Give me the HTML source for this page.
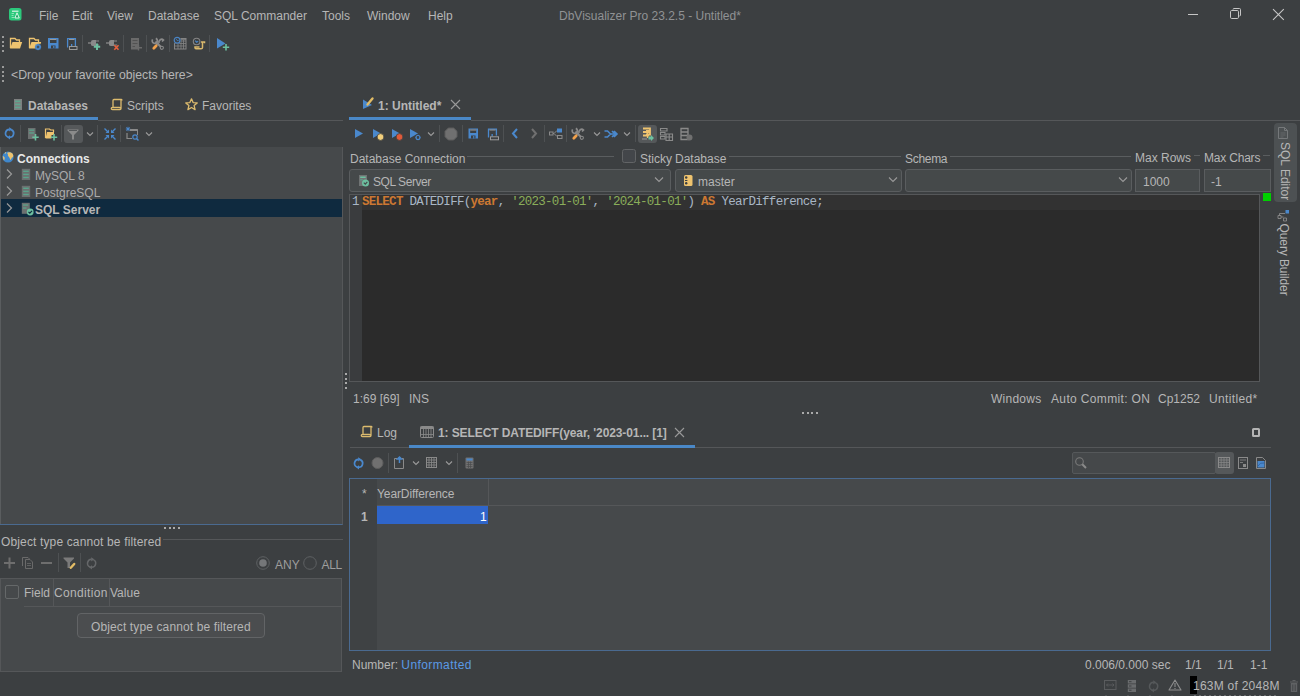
<!DOCTYPE html>
<html><head><meta charset="utf-8">
<style>
html,body{margin:0;padding:0;}
body{width:1300px;height:696px;overflow:hidden;background:#3c3f41;position:relative;font-family:"Liberation Sans",sans-serif;font-size:12px;color:#b6b6b6;}
.a{position:absolute;}
.t{position:absolute;white-space:pre;line-height:14px;}
.b{font-weight:bold;}
.hl{position:absolute;height:1px;background:#555759;}
.vl{position:absolute;width:1px;background:#555759;}
svg{position:absolute;overflow:visible;}
.mono{font-family:"Liberation Mono",monospace;}
</style></head><body>

<!-- ===== Title / menu bar ===== -->
<svg style="left:9px;top:8px" width="13" height="13" viewBox="0 0 13 13"><rect x="0" y="0" width="12.5" height="12.5" rx="2.5" fill="#2cc97c"/><path d="M3,3.2H9.5" stroke="#e6f7ee" stroke-width="1.1"/><path d="M2.6,5.5H5M2.6,7.5H4.5M2.6,9.5H5.5" stroke="#a8e8c6" stroke-width="0.8"/><path d="M8,4.8 L10.3,10 H6 Z" fill="none" stroke="#d8f4e4" stroke-width="1"/><circle cx="8" cy="8.3" r="0.9" fill="#1f9a5c"/></svg>
<div class="a" style="left:1188px;top:14px;width:10px;height:1px;background:#c6c6c6;"></div>
<svg style="left:1228px;top:7px" width="16" height="14" viewBox="0 0 16 14"><path d="M5,2.5 Q5,1.5 6,1.5 H11.5 Q12.5,1.5 12.5,2.5 V8 Q12.5,9 11.5,9" fill="none" stroke="#c6c6c6" stroke-width="1"/><rect x="2.5" y="3.5" width="8" height="8" rx="1.2" fill="none" stroke="#c6c6c6" stroke-width="1"/></svg>
<svg style="left:1272px;top:8px" width="13" height="13" viewBox="0 0 13 13"><path d="M1,1.2 L11.8,11.8 M11.8,1.2 L1,11.8" stroke="#c6c6c6" stroke-width="1.1"/></svg>
<div class="t" style="left:39px;top:9px;">File</div>
<div class="t" style="left:72px;top:9px;">Edit</div>
<div class="t" style="left:107px;top:9px;">View</div>
<div class="t" style="left:148px;top:9px;">Database</div>
<div class="t" style="left:214px;top:9px;">SQL Commander</div>
<div class="t" style="left:322px;top:9px;">Tools</div>
<div class="t" style="left:367px;top:9px;">Window</div>
<div class="t" style="left:428px;top:9px;">Help</div>
<div class="t" style="left:559px;top:9px;color:#909294;">DbVisualizer Pro 23.2.5 - Untitled*</div>

<!-- ===== Main toolbar ===== -->
<!-- grip -->
<div class="a" style="left:2px;top:36px;width:2px;height:2px;background:#9a9a9a;box-shadow:0 5px #9a9a9a,0 9px #9a9a9a,0 14px #9a9a9a;"></div>
<div class="a" style="left:2px;top:66px;width:2px;height:2px;background:#9a9a9a;box-shadow:0 5px #9a9a9a,0 9px #9a9a9a,0 14px #9a9a9a;"></div>
<!-- open folder -->
<svg style="left:8px;top:36px" width="16" height="16" viewBox="0 0 16 16"><path d="M2.5,12 V2.5 H7 L8.5,4 H11.5 V6" fill="none" stroke="#eec36f" stroke-width="1.3"/><path d="M4.5,6 H14.2 L12,12.5 H2 Z" fill="#eec36f"/></svg>
<!-- folder gear -->
<svg style="left:27px;top:36px" width="16" height="16" viewBox="0 0 16 16"><path d="M2.5,12 V2.5 H7 L8.5,4 H11.5 V6" fill="none" stroke="#eec36f" stroke-width="1.3"/><path d="M4.5,6 H14.2 L13.5,8 A4,4 0 0 0 8.5,12.5 H2 Z" fill="#eec36f"/><circle cx="11" cy="11" r="2.2" fill="none" stroke="#4a88cc" stroke-width="1.6"/><path d="M11,7.8V14.2M7.8,11H14.2M8.8,8.8L13.2,13.2M13.2,8.8L8.8,13.2" stroke="#4a88cc" stroke-width="1"/><circle cx="11" cy="11" r="1" fill="#3c3f41"/></svg>
<!-- save -->
<svg style="left:46px;top:36px" width="16" height="16" viewBox="0 0 16 16"><rect x="2" y="2" width="10.5" height="10.5" fill="#4a88cc"/><rect x="4" y="3" width="6.5" height="4" fill="#3c3f41"/><rect x="4" y="3" width="6.5" height="1" fill="#9a9a9a"/><rect x="5" y="9.5" width="4.5" height="3" fill="#3c3f41"/><rect x="7.2" y="10" width="1.2" height="2" fill="#4a88cc"/></svg>
<!-- save as -->
<svg style="left:65px;top:36px" width="16" height="16" viewBox="0 0 16 16"><path d="M2.6,11.5 V2.6 H10.4 V10" fill="none" stroke="#4a88cc" stroke-width="1.3"/><rect x="4" y="3" width="5.5" height="1" fill="#9a9a9a"/><rect x="6" y="8" width="1.3" height="2.5" fill="#4a88cc"/><rect x="4.5" y="10.5" width="7.5" height="3" fill="none" stroke="#9a9a9a" stroke-width="1"/></svg>
<div class="vl" style="left:82px;top:35px;height:17px;background:#4e5153"></div>
<!-- plug + -->
<svg style="left:86px;top:36px" width="16" height="16" viewBox="0 0 16 16"><path d="M2,7 H5" stroke="#8a8a8a" stroke-width="1.3"/><path d="M5,5.5 Q5,4 7,4 H10 V10 H7 Q5,10 5,8.5 Z" fill="#8a8a8a"/><path d="M10,5 H13 M10,9 H13" stroke="#8a8a8a" stroke-width="1.1"/><path d="M11,7.5 V14 M7.8,10.8 H14.2" stroke="#6cc0a0" stroke-width="2"/></svg>
<!-- plug x -->
<svg style="left:104px;top:36px" width="16" height="16" viewBox="0 0 16 16"><path d="M2,7 H5" stroke="#8a8a8a" stroke-width="1.3"/><path d="M5,5.5 Q5,4 7,4 H10 V10 H7 Q5,10 5,8.5 Z" fill="#8a8a8a"/><path d="M10,5 H13 M10,9 H13" stroke="#8a8a8a" stroke-width="1.1"/><path d="M10.3,9.3 L14.5,13.8 M14.5,9.3 L10.3,13.8" stroke="#e8613e" stroke-width="1.6"/></svg>
<div class="vl" style="left:123px;top:35px;height:17px;background:#4e5153"></div>
<!-- server disabled -->
<svg style="left:129px;top:36px" width="16" height="16" viewBox="0 0 16 16"><rect x="2" y="2" width="8" height="11.5" fill="#6a6a6a"/><path d="M3.5,4.5H8.5M3.5,7.5H8.5M3.5,10.5H6" stroke="#525252" stroke-width="1"/><path d="M9.5,9V14.5M7,11.8H13" stroke="#6a6a6a" stroke-width="1.4"/></svg>
<div class="vl" style="left:146px;top:35px;height:17px;background:#4e5153"></div>
<!-- tools -->
<svg style="left:150px;top:36px" width="16" height="16" viewBox="0 0 16 16"><path d="M2.6,3.4 A2.6,2.6 0 1 0 5.8,2.4" fill="none" stroke="#8a8a8a" stroke-width="1.7"/><path d="M5.5,5.5 L11,11" stroke="#8a8a8a" stroke-width="1.9"/><path d="M6,9.5 L9.5,6" stroke="#8a8a8a" stroke-width="1.3"/><circle cx="11.8" cy="11.8" r="1.6" fill="none" stroke="#8a8a8a" stroke-width="1.1"/><path d="M8.5,6 L10.5,3.5 Q12,2.5 13.5,4 L12,5.5" fill="none" stroke="#8a8a8a" stroke-width="1.7"/><path d="M3.8,12.2 L6.2,9.8" stroke="#f0a04b" stroke-width="2.8" stroke-linecap="round"/></svg>
<div class="vl" style="left:169px;top:35px;height:17px;background:#4e5153"></div>
<!-- clock grid -->
<svg style="left:172px;top:36px" width="16" height="16" viewBox="0 0 16 16"><rect x="2.5" y="2.5" width="11.5" height="10.5" fill="none" stroke="#858585" stroke-width="1"/><rect x="8" y="2" width="6" height="1.8" fill="#858585"/><path d="M2.5,5H14M2.5,7.5H14M2.5,10H14M6,4V13M9,4V13M11.5,4V13" stroke="#858585" stroke-width="0.8"/><circle cx="5.1" cy="4.2" r="3.6" fill="#3c3f41"/><circle cx="5.1" cy="4.2" r="2.9" fill="none" stroke="#4a84c4" stroke-width="1.2"/><path d="M4.2,3.2 L5.3,4.6 L6.6,4.4" fill="none" stroke="#4a84c4" stroke-width="0.9"/></svg>
<!-- clock scroll -->
<svg style="left:191px;top:36px" width="16" height="16" viewBox="0 0 16 16"><path d="M11.5,6.5 V11.5 Q11.5,12.8 10,12.8 H5 Q4,12.8 4,11.8 V11 H8.5 M10,6 H13.5 V7.2" fill="none" stroke="#d9b86c" stroke-width="1.5"/><circle cx="5.6" cy="5.5" r="3.9" fill="#3c3f41"/><circle cx="5.6" cy="5.5" r="3.3" fill="none" stroke="#858585" stroke-width="1.1"/><path d="M4.2,4.6 L5.6,6.2 L7.2,5.2" fill="none" stroke="#4a84c4" stroke-width="1.1"/></svg>
<div class="vl" style="left:209px;top:35px;height:17px;background:#4e5153"></div>
<!-- play plus -->
<svg style="left:215px;top:36px" width="16" height="16" viewBox="0 0 16 16"><path d="M2,2 L10.5,7.5 L2,12.5 Z" fill="#4a88cc"/><path d="M11,8 V14.5 M7.8,11.2 H14.2" stroke="#6cc0a0" stroke-width="1.6"/></svg>


<!-- ===== Favorites bar ===== -->
<div class="t" style="left:11px;top:68px;font-size:12.25px;">&lt;Drop your favorite objects here&gt;</div>

<!-- ===== Left tabs ===== -->
<svg style="left:13px;top:98px" width="10" height="13" viewBox="0 0 10 13"><rect x="1" y="1" width="8" height="11" fill="#7d7f7f"/><rect x="2" y="2.5" width="5.5" height="1.6" fill="#5fa58e"/><rect x="2" y="5.6" width="5.5" height="1.6" fill="#5fa58e"/><rect x="2" y="8.7" width="5.5" height="1.6" fill="#5fa58e"/></svg>
<svg style="left:110px;top:98px" width="14" height="13" viewBox="0 0 14 13"><path d="M3,9 V2.5 Q3,1.5 4,1.5 H11.5 Q12,1.5 12,2.5 M11,2 V10.5 Q11,11.5 10,11.5 H2.5 Q1.3,11.5 1.3,10.3 Q1.3,9.3 2.5,9.3 H9.5 Q10.5,9.3 10.5,10.5" fill="none" stroke="#dcbb6e" stroke-width="1.3"/></svg>
<svg style="left:184px;top:97px" width="15" height="14" viewBox="0 0 15 14"><path d="M7.5,1.8 L9.1,5.6 L13.2,5.9 L10.1,8.6 L11.1,12.6 L7.5,10.5 L3.9,12.6 L4.9,8.6 L1.8,5.9 L5.9,5.6 Z" fill="none" stroke="#dcbb6e" stroke-width="1.3" stroke-linejoin="round"/></svg>

<div class="t b" style="left:28px;top:99px;">Databases</div>
<div class="t" style="left:127px;top:99px;">Scripts</div>
<div class="t" style="left:202px;top:99px;">Favorites</div>
<div class="a" style="left:0;top:117px;width:98px;height:3px;background:#4a88c7;"></div>
<div class="hl" style="left:98px;top:120px;width:245px;"></div>


<!-- left toolbar -->
<svg style="left:2.7px;top:126px" width="14" height="15" viewBox="0 0 14 15"><path d="M6.6,3.3 A4,4 0 0 0 5,11" fill="none" stroke="#4a88cc" stroke-width="1.7"/><path d="M6.6,11.3 A4,4 0 0 0 8.2,3.6" fill="none" stroke="#4a88cc" stroke-width="1.7"/><path d="M6.2,1.2 L9.2,3.3 L6.2,5.4 Z M7,9.2 L4,11.3 L7,13.4 Z" fill="#4a88cc"/></svg>
<div class="vl" style="left:20px;top:125px;height:17px;background:#4e5153"></div>
<svg style="left:27px;top:127px" width="12" height="14" viewBox="0 0 12 14"><rect x="1" y="1" width="7.5" height="11" fill="#6c7070"/><rect x="2.2" y="2.5" width="5" height="1.3" fill="#5aa38b"/><rect x="2.2" y="5.3" width="5" height="1.3" fill="#5aa38b"/><path d="M8.5,7 V13.5 M5.3,10.2 H11.7" stroke="#6cc0a0" stroke-width="1.6"/></svg>
<svg style="left:44px;top:127px" width="14" height="14" viewBox="0 0 14 14"><path d="M1.5,11 V2 H5.5 L6.5,3 H9.5 V5" fill="none" stroke="#eec36f" stroke-width="1.2"/><path d="M3,5 H10 V8 H7.5 V11.5 H1.5 Z" fill="#eec36f"/><path d="M10,7 V13.5 M6.8,10.2 H13.2" stroke="#6cc0a0" stroke-width="1.6"/></svg>
<div class="vl" style="left:61px;top:125px;height:17px;background:#4e5153"></div>
<div class="a" style="left:64px;top:125px;width:19px;height:18px;border-radius:3px;background:#55585a;"></div>
<svg style="left:66px;top:128px" width="14" height="13" viewBox="0 0 14 13"><path d="M1.5,1.5 H12.5 V2.5 L8,7 V11.5 H6 V7 L1.5,2.5 Z" fill="#8a8a8a"/><rect x="3" y="2" width="8" height="1" fill="#55585a"/></svg>
<svg style="left:86px;top:131px" width="8" height="6" viewBox="0 0 8 6"><path d="M1,1.5 L4,4.5 L7,1.5" fill="none" stroke="#9a9a9a" stroke-width="1.1"/></svg>
<div class="vl" style="left:97px;top:125px;height:17px;background:#4e5153"></div>
<svg style="left:103px;top:127px" width="14" height="14" viewBox="0 0 14 14"><path d="M1.5,1.5 L5.5,5.5 M12.5,1.5 L8.5,5.5 M1.5,12.5 L5.5,8.5 M12.5,12.5 L8.5,8.5" stroke="#4a88cc" stroke-width="1.4"/><path d="M6,6 H2.5 L6,2.5 Z M8,6 H11.5 L8,2.5 Z M6,8 H2.5 L6,11.5 Z M8,8 H11.5 L8,11.5 Z" fill="#4a88cc"/></svg>
<div class="vl" style="left:120px;top:125px;height:17px;background:#4e5153"></div>
<svg style="left:124px;top:126px" width="16" height="16" viewBox="0 0 16 16"><path d="M6,3.5 H13.5 V9" fill="none" stroke="#8a8a8a" stroke-width="1"/><rect x="6" y="3" width="7.5" height="2" fill="#8a8a8a"/><path d="M3,7 V12.5 H8" fill="none" stroke="#8a8a8a" stroke-width="1.2"/><path d="M4,0.8 V5.2 M1.8,3 H6.2 M2.4,1.4 L5.6,4.6 M5.6,1.4 L2.4,4.6" stroke="#4a88cc" stroke-width="1"/><circle cx="11" cy="11" r="2.2" fill="none" stroke="#4a88cc" stroke-width="1.2"/><path d="M12.5,12.5 L14.5,14.5" stroke="#4a88cc" stroke-width="1.5"/></svg>
<svg style="left:145px;top:131px" width="8" height="6" viewBox="0 0 8 6"><path d="M1,1.5 L4,4.5 L7,1.5" fill="none" stroke="#9a9a9a" stroke-width="1.1"/></svg>
<!-- ===== Tree panel ===== -->
<div class="a" style="left:0;top:147px;width:342px;height:377px;background:#46494b;border-right:1px solid #555759;border-bottom:1px solid #4a6a90;"></div>
<div class="a" style="left:1px;top:199px;width:341px;height:18px;background:#0f2a3f;"></div>
<div class="a" style="left:0;top:147px;width:1px;height:377px;background:#5a5d5f;"></div>
<svg style="left:2px;top:151px" width="13" height="13" viewBox="0 0 13 13"><circle cx="6" cy="6" r="5.6" fill="#3f87cc"/><path d="M5.5,1.6 Q8,0.5 10.5,2.5 Q11.8,4 11,6.5 Q10,5.5 9.5,7.5 Q8.5,10 8,8 Q7.5,6 6.5,5.5 Q5.5,4.5 6,3.5 Q5,3 5.5,1.6 Z" fill="#eec36f"/><path d="M0.8,5 Q2,5 2.5,6.5 Q3,8 2,9.5 Q1,8 0.8,5 Z" fill="#eec36f"/><path d="M3.5,1.2 Q4,2 3,2.8" fill="none" stroke="#eec36f" stroke-width="0.9"/></svg>
<svg style="left:5px;top:168px" width="9" height="12" viewBox="0 0 9 12"><path d="M2,1.5 L6.5,6 L2,10.5" fill="none" stroke="#9a9a9a" stroke-width="1.2"/></svg>
<svg style="left:5px;top:185px" width="9" height="12" viewBox="0 0 9 12"><path d="M2,1.5 L6.5,6 L2,10.5" fill="none" stroke="#9a9a9a" stroke-width="1.2"/></svg>
<svg style="left:5px;top:202px" width="9" height="12" viewBox="0 0 9 12"><path d="M2,1.5 L6.5,6 L2,10.5" fill="none" stroke="#9a9a9a" stroke-width="1.2"/></svg>
<svg style="left:21px;top:168px" width="10" height="13" viewBox="0 0 10 13"><rect x="0.8" y="0.8" width="8.4" height="11.2" fill="#6c7070"/><rect x="2.2" y="2.6" width="5.6" height="1.4" fill="#5aa38b"/><rect x="2.2" y="5.7" width="5.6" height="1.4" fill="#5aa38b"/><rect x="2.2" y="8.8" width="5.6" height="1.4" fill="#5aa38b"/></svg>
<svg style="left:21px;top:185px" width="10" height="13" viewBox="0 0 10 13"><rect x="0.8" y="0.8" width="8.4" height="11.2" fill="#6c7070"/><rect x="2.2" y="2.6" width="5.6" height="1.4" fill="#5aa38b"/><rect x="2.2" y="5.7" width="5.6" height="1.4" fill="#5aa38b"/><rect x="2.2" y="8.8" width="5.6" height="1.4" fill="#5aa38b"/></svg>
<svg style="left:21px;top:202px" width="13" height="14" viewBox="0 0 13 14"><rect x="0.8" y="0.8" width="8" height="11" fill="#6c7070"/><rect x="2" y="2.4" width="5.2" height="1.3" fill="#5aa38b"/><rect x="2" y="5.4" width="3.5" height="1.3" fill="#5aa38b"/><circle cx="9.2" cy="10" r="3.4" fill="#6cc0a0"/><path d="M7.5,9.8 L8.8,11.2 L11,8.8" fill="none" stroke="#0f2a3f" stroke-width="1.2"/></svg>
<div class="t b" style="left:17px;top:152px;color:#e8e8e8;">Connections</div>
<div class="t" style="left:35px;top:169px;color:#ababab;">MySQL 8</div>
<div class="t" style="left:35px;top:186px;color:#ababab;">PostgreSQL</div>
<div class="t b" style="left:35px;top:203px;">SQL Server</div>

<!-- ===== Filter area ===== -->
<!-- splitter dots left -->
<div class="a" style="left:164px;top:527px;width:2px;height:2px;background:#aaa;box-shadow:5px 0 #aaa,9px 0 #aaa,14px 0 #aaa;"></div>
<!-- filter toolbar -->
<svg style="left:3px;top:556px" width="14" height="14" viewBox="0 0 14 14"><path d="M6.5,1.5 V12.5 M1,7 H12" stroke="#6e6e6e" stroke-width="2"/></svg>
<svg style="left:21px;top:556px" width="14" height="14" viewBox="0 0 14 14"><path d="M1.5,10 V1.5 H7 L8.5,3" fill="none" stroke="#6a6a6a" stroke-width="1"/><path d="M4.5,3.5 H9 L11.5,6 V12.5 H4.5 Z" fill="none" stroke="#6a6a6a" stroke-width="1"/><path d="M6,7.5 H10 M6,9.5 H10" stroke="#6a6a6a" stroke-width="0.8"/></svg>
<div class="a" style="left:41px;top:562px;width:11px;height:2px;background:#6e6e6e;"></div>
<div class="vl" style="left:58px;top:553px;height:19px;background:#4e5153"></div>
<svg style="left:62px;top:556px" width="15" height="15" viewBox="0 0 15 15"><path d="M1.5,1.5 H12 V2.5 L8,6.5 V12 H5.5 V6.5 L1.5,2.5 Z" fill="#7a7a7a"/><path d="M12.2,8 L8.8,11.8" stroke="#e2bc66" stroke-width="2.4" stroke-linecap="round"/></svg>
<div class="vl" style="left:80px;top:553px;height:19px;background:#4e5153"></div>
<svg style="left:85px;top:556px" width="14" height="15" viewBox="0 0 14 15"><path d="M6.6,3.3 A4,4 0 0 0 5,11" fill="none" stroke="#656769" stroke-width="1.5"/><path d="M6.6,11.3 A4,4 0 0 0 8.2,3.6" fill="none" stroke="#656769" stroke-width="1.5"/><path d="M6.2,1.2 L9.2,3.3 L6.2,5.4 Z M7,9.2 L4,11.3 L7,13.4 Z" fill="#656769"/></svg>
<!-- radios -->
<svg style="left:256px;top:556px" width="15" height="15" viewBox="0 0 15 15"><circle cx="7" cy="7" r="6.3" fill="none" stroke="#5e6163" stroke-width="1"/><circle cx="7" cy="7" r="3.8" fill="#757779"/></svg>
<svg style="left:303px;top:556px" width="15" height="15" viewBox="0 0 15 15"><circle cx="7" cy="7" r="6.3" fill="none" stroke="#5e6163" stroke-width="1"/></svg>

<div class="t" style="left:1px;top:535px;letter-spacing:0.14px;">Object type cannot be filtered</div>
<div class="hl" style="left:163px;top:539px;width:180px;"></div>
<div class="t" style="left:275px;top:558px;color:#9e9e9e;">ANY</div>
<div class="t" style="left:321.5px;top:558px;color:#9e9e9e;letter-spacing:-0.3px;">ALL</div>
<div class="a" style="left:0;top:578px;width:342px;height:94px;background:#46494b;border:1px solid #555759;box-sizing:border-box;"></div>
<div class="a" style="left:5px;top:585px;width:14px;height:14px;box-sizing:border-box;border:1px solid #656869;border-radius:2px;"></div>
<div class="vl" style="left:53px;top:579px;height:27px;background:#555759"></div>
<div class="vl" style="left:109px;top:579px;height:27px;background:#555759"></div>
<div class="hl" style="left:24px;top:606px;width:318px;background:#555759"></div>
<div class="t" style="left:24px;top:586px;">Field</div>
<div class="t" style="left:54px;top:586px;letter-spacing:0.35px;">Condition</div>
<div class="t" style="left:110px;top:586px;">Value</div>
<div class="a" style="left:77px;top:613px;width:188px;height:25px;box-sizing:border-box;border:1.5px solid #626466;border-radius:4px;background:#4b4d4f;"></div>
<div class="t" style="left:91px;top:620px;letter-spacing:0.12px;">Object type cannot be filtered</div>

<!-- ===== Editor tab ===== -->
<div class="t b" style="left:378px;top:99px;">1: Untitled*</div>
<div class="a" style="left:349px;top:117px;width:122px;height:3px;background:#4a88c7;"></div>
<div class="hl" style="left:471px;top:120px;width:829px;"></div>


<svg style="left:361px;top:96px" width="16" height="16" viewBox="0 0 16 16"><path d="M2,3.5 L11,9 L2,13 Z" fill="#4a88cc"/><path d="M6.5,8.5 L11.5,2.5" stroke="#e2bc66" stroke-width="2.4" stroke-linecap="round"/></svg>
<svg style="left:450px;top:99px" width="11" height="11" viewBox="0 0 11 11"><path d="M1,1 L10,10 M10,1 L1,10" stroke="#9a9a9a" stroke-width="1.1"/></svg>
<!-- editor toolbar -->
<svg style="left:353px;top:127px" width="12" height="13" viewBox="0 0 12 13"><path d="M2,2 L10,6.5 L2,11 Z" fill="#4a88cc"/></svg>
<svg style="left:371px;top:127px" width="15" height="15" viewBox="0 0 15 15"><path d="M2,2 L10,6.5 L2,11 Z" fill="#4a88cc"/><circle cx="9.5" cy="10" r="3.4" fill="#f2cf7c" stroke="#3c3f41" stroke-width="0.8"/></svg>
<svg style="left:390px;top:127px" width="15" height="15" viewBox="0 0 15 15"><path d="M2,2 L10,6.5 L2,11 Z" fill="#4a88cc"/><circle cx="9.5" cy="10" r="3.4" fill="#e05a3a" stroke="#3c3f41" stroke-width="0.8"/></svg>
<svg style="left:408px;top:127px" width="15" height="15" viewBox="0 0 15 15"><path d="M2,2 L10,6.5 L2,11 Z" fill="#4a88cc"/><circle cx="10" cy="10.5" r="3.2" fill="#3c3f41"/><circle cx="10" cy="10.5" r="2" fill="none" stroke="#4a88cc" stroke-width="1.1"/><path d="M10,7.8 V8.6 M12.4,10.5 H11.6 M7.6,10.5 H8.4 M10,13.2 V12.4" stroke="#4a88cc" stroke-width="1"/></svg>
<svg style="left:427px;top:131px" width="8" height="6" viewBox="0 0 8 6"><path d="M1,1.5 L4,4.5 L7,1.5" fill="none" stroke="#9a9a9a" stroke-width="1.1"/></svg>
<div class="vl" style="left:439px;top:125px;height:17px;background:#4e5153"></div>
<svg style="left:444px;top:127px" width="14" height="14" viewBox="0 0 14 14"><path d="M4.3,1 H9.7 L13,4.3 V9.7 L9.7,13 H4.3 L1,9.7 V4.3 Z" fill="#707070" stroke="#5c5c5c" stroke-width="1"/></svg>
<div class="vl" style="left:462px;top:125px;height:17px;background:#4e5153"></div>
<svg style="left:467px;top:127px" width="12" height="13" viewBox="0 0 12 13"><rect x="1.5" y="1.5" width="9.5" height="10" fill="#4a88cc"/><rect x="3.2" y="2.5" width="6" height="3.5" fill="#3c3f41"/><rect x="3.2" y="2.5" width="6" height="1" fill="#9a9a9a"/><rect x="4" y="8.5" width="4.5" height="3" fill="#3c3f41"/><rect x="6.2" y="9" width="1.1" height="2.5" fill="#4a88cc"/></svg>
<svg style="left:486px;top:127px" width="14" height="14" viewBox="0 0 14 14"><path d="M2.5,10.5 V2.1 H10.4 V8.5" fill="none" stroke="#4a88cc" stroke-width="1.3"/><rect x="3.5" y="2.5" width="6" height="1" fill="#9a9a9a"/><rect x="5.5" y="7" width="1.3" height="2.5" fill="#4a88cc"/><rect x="4.5" y="9.8" width="8" height="3" fill="none" stroke="#9a9a9a" stroke-width="1"/></svg>
<div class="vl" style="left:503px;top:125px;height:17px;background:#4e5153"></div>
<svg style="left:510px;top:127px" width="10" height="13" viewBox="0 0 10 13"><path d="M7,2 L3,6.5 L7,11" fill="none" stroke="#4a88cc" stroke-width="2"/></svg>
<svg style="left:529px;top:127px" width="10" height="13" viewBox="0 0 10 13"><path d="M3,2 L7,6.5 L3,11" fill="none" stroke="#707070" stroke-width="2"/></svg>
<div class="vl" style="left:544px;top:125px;height:17px;background:#4e5153"></div>
<svg style="left:548px;top:127px" width="16" height="14" viewBox="0 0 16 14"><rect x="1.5" y="5" width="3.5" height="3" fill="none" stroke="#8a8a8a" stroke-width="1"/><path d="M5,6.5 H6 L9,3.5 M6,6.5 L9,9.5" fill="none" stroke="#8a8a8a" stroke-width="1"/><rect x="9" y="1.5" width="5" height="4" fill="#4a88cc"/><rect x="9.5" y="8.5" width="4.5" height="3" fill="none" stroke="#8a8a8a" stroke-width="1"/></svg>
<div class="vl" style="left:566px;top:125px;height:17px;background:#4e5153"></div>
<svg style="left:570px;top:126px" width="16" height="16" viewBox="0 0 16 16"><path d="M2.6,3.4 A2.6,2.6 0 1 0 5.8,2.4" fill="none" stroke="#8a8a8a" stroke-width="1.7"/><path d="M5.5,5.5 L11,11" stroke="#8a8a8a" stroke-width="1.9"/><path d="M6,9.5 L9.5,6" stroke="#8a8a8a" stroke-width="1.3"/><circle cx="11.8" cy="11.8" r="1.6" fill="none" stroke="#8a8a8a" stroke-width="1.1"/><path d="M8.5,6 L10.5,3.5 Q12,2.5 13.5,4 L12,5.5" fill="none" stroke="#8a8a8a" stroke-width="1.7"/><path d="M3.8,12.2 L6.2,9.8" stroke="#f0a04b" stroke-width="2.8" stroke-linecap="round"/></svg>
<svg style="left:593px;top:131px" width="8" height="6" viewBox="0 0 8 6"><path d="M1,1.5 L4,4.5 L7,1.5" fill="none" stroke="#9a9a9a" stroke-width="1.1"/></svg>
<svg style="left:603px;top:128px" width="15" height="12" viewBox="0 0 15 12"><path d="M1.5,3 H4.5 L7.5,6 L4.5,9 H1.5" fill="none" stroke="#4a88cc" stroke-width="1.6"/><path d="M7.5,6 H10.5 M9,3 L12,6 L9,9 M11,3 L14,6 L11,9" fill="none" stroke="#4a88cc" stroke-width="1.6"/></svg>
<svg style="left:623px;top:131px" width="8" height="6" viewBox="0 0 8 6"><path d="M1,1.5 L4,4.5 L7,1.5" fill="none" stroke="#9a9a9a" stroke-width="1.1"/></svg>
<div class="vl" style="left:635px;top:125px;height:17px;background:#4e5153"></div>
<div class="a" style="left:638px;top:125px;width:19px;height:18px;border-radius:3px;background:#55585a;"></div>
<svg style="left:640px;top:127px" width="15" height="15" viewBox="0 0 15 15"><path d="M3,1.5 H10 V4 H6 M3,5 H10 V7.5 H6 M3,8.5 H9" fill="none" stroke="#eec36f" stroke-width="1.8"/><path d="M7.5,4 V11" stroke="#eec36f" stroke-width="1.3"/><path d="M2,12 H7" stroke="#8a8a8a" stroke-width="1.3"/><path d="M8.5,9.5 H11 V8 L14,11 L11,14 V12.5 H8.5 Z" fill="#6cc0a0"/></svg>
<svg style="left:659px;top:127px" width="15" height="15" viewBox="0 0 15 15"><path d="M1.5,1.5 H8 V4 H1.5 Z M1.5,5.5 H6 V8 H1.5 Z M1.5,9.5 H6 V12 H1.5 Z" fill="none" stroke="#8a8a8a" stroke-width="1.1"/><path d="M7,7 H13.5 V13.5 H7 Z M7,10 H13.5 M10.2,7 V13.5" fill="none" stroke="#8a8a8a" stroke-width="1.1"/></svg>
<svg style="left:679px;top:127px" width="15" height="15" viewBox="0 0 15 15"><path d="M2,1.5 H9 V12.5 H2 Z M2,5 H9 M2,8.5 H9" fill="none" stroke="#8a8a8a" stroke-width="1.3"/><circle cx="10.5" cy="10.5" r="3" fill="#707070"/></svg>
<!-- titled border lines + checkbox -->
<div class="hl" style="left:467px;top:156px;width:147px;background:#5a5d5f"></div>
<div class="a" style="left:622px;top:149px;width:14px;height:14px;box-sizing:border-box;border:1.5px solid #626466;border-radius:2.5px;background:#43464a;"></div>
<div class="hl" style="left:729px;top:156px;width:172px;background:#5a5d5f"></div>
<div class="hl" style="left:950px;top:156px;width:181px;background:#5a5d5f"></div>
<div class="hl" style="left:1194px;top:155px;width:6px;background:#5a5d5f"></div>
<div class="hl" style="left:1263px;top:155px;width:7px;background:#5a5d5f"></div>
<!-- ===== Connection row ===== -->
<div class="t" style="left:350px;top:152px;">Database Connection</div>
<div class="t" style="left:640px;top:152px;">Sticky</div>
<div class="t" style="left:675px;top:152px;">Database</div>
<div class="t" style="left:905px;top:152px;letter-spacing:-0.3px;">Schema</div>
<div class="t" style="left:1135px;top:151px;">Max Rows</div>
<div class="t" style="left:1204px;top:151px;letter-spacing:-0.2px;">Max Chars</div>

<div class="a" style="left:349px;top:169px;width:322px;height:23px;box-sizing:border-box;border:1px solid #5a5d5f;border-radius:3px;background:#45494a;"></div>
<div class="t" style="left:373px;top:175px;letter-spacing:-0.45px;">SQL Server</div>
<div class="a" style="left:675px;top:169px;width:227px;height:23px;box-sizing:border-box;border:1px solid #5a5d5f;border-radius:3px;background:#45494a;"></div>
<div class="t" style="left:698px;top:175px;">master</div>
<div class="a" style="left:905px;top:169px;width:227px;height:23px;box-sizing:border-box;border:1px solid #5a5d5f;border-radius:3px;background:#45494a;"></div>
<div class="a" style="left:1135px;top:169px;width:65px;height:23px;box-sizing:border-box;border:1px solid #5a5d5f;background:#45494a;"></div>
<div class="t" style="left:1143px;top:175px;">1000</div>
<div class="a" style="left:1204px;top:169px;width:67px;height:23px;box-sizing:border-box;border:1px solid #5a5d5f;background:#45494a;"></div>
<div class="t" style="left:1211px;top:175px;">-1</div>


<svg style="left:358px;top:174px" width="14" height="14" viewBox="0 0 14 14"><rect x="1" y="1" width="8" height="11" fill="#707474"/><rect x="2.2" y="2.5" width="5.5" height="1.5" fill="#6cc0a0"/><rect x="2.2" y="5.2" width="2.5" height="1.2" fill="#5aa38b"/><circle cx="7.5" cy="9" r="3.5" fill="#6cc0a0"/><path d="M5.8,8.7 L7.3,10.2 L9.3,7.8" fill="none" stroke="#45494a" stroke-width="1.2"/></svg>
<svg style="left:654px;top:176px" width="10" height="8" viewBox="0 0 10 8"><path d="M1,1.5 L5,5.5 L9,1.5" fill="none" stroke="#9a9a9a" stroke-width="1.1"/></svg>
<svg style="left:683px;top:174px" width="10" height="13" viewBox="0 0 10 13"><rect x="1" y="1" width="8.5" height="11" rx="1.5" fill="#eec36f"/><circle cx="3.2" cy="3.5" r="1.2" fill="#3c3f41"/><rect x="2" y="6" width="2.4" height="1" fill="#3c3f41"/><circle cx="3.2" cy="9.2" r="1.2" fill="#3c3f41"/></svg>
<svg style="left:888px;top:176px" width="10" height="8" viewBox="0 0 10 8"><path d="M1,1.5 L5,5.5 L9,1.5" fill="none" stroke="#9a9a9a" stroke-width="1.1"/></svg>
<svg style="left:1118px;top:176px" width="10" height="8" viewBox="0 0 10 8"><path d="M1,1.5 L5,5.5 L9,1.5" fill="none" stroke="#9a9a9a" stroke-width="1.1"/></svg>
<!-- ===== Editor ===== -->
<div class="a" style="left:349px;top:194px;width:911px;height:188px;box-sizing:border-box;border:1px solid #555759;background:#2b2b2b;"></div>
<div class="a" style="left:350px;top:195px;width:12px;height:186px;background:#3a3c3e;"></div>
<div class="a" style="left:362px;top:195px;width:897px;height:15px;background:#323232;"></div>
<div class="t mono" style="left:352px;top:195px;font-size:12.5px;color:#a9b7c6;">1</div>
<div class="t mono" style="left:362px;top:195px;font-size:12.5px;letter-spacing:-0.72px;color:#a9b7c6;"><span style="color:#cc7832;font-weight:bold">SELECT</span> DATEDIFF(<span style="color:#cc7832;font-weight:bold">year</span>, <span style="color:#8aad5a">'2023-01-01'</span>, <span style="color:#8aad5a">'2024-01-01'</span>) <span style="color:#cc7832;font-weight:bold">AS</span> YearDifference;</div>
<div class="a" style="left:1263px;top:193px;width:8px;height:8px;background:#00d000;"></div>

<!-- ===== Right vertical tabs ===== -->
<div class="a" style="left:1274px;top:123px;width:23px;height:79px;border-radius:4px;background:#4d5153;"></div>
<svg style="left:1277px;top:126px" width="12" height="14" viewBox="0 0 12 14"><path d="M1.5,1.5 H7.5 L10.5,4.5 V12.5 H1.5 Z M7.5,1.5 V4.5 H10.5" fill="none" stroke="#75787a" stroke-width="1"/><path d="M3.5,7 H8.5 M3.5,9 H8.5 M3.5,11 H6.5" stroke="#6a6d6f" stroke-width="0.8"/></svg>
<div class="t" style="left:1256px;top:164px;width:58px;transform:rotate(90deg);transform-origin:center;">SQL Editor</div>
<svg style="left:1276px;top:209px" width="14" height="13" viewBox="0 0 14 13"><path d="M2,6.5 H5 V9.5 H2 Z M7.5,9 H10.5 V12 H7.5 Z M3.5,6.5 V4.5 H9 M5,8 H7.5" fill="none" stroke="#8a8a8a" stroke-width="0.9"/><rect x="9.5" y="1" width="3.5" height="3.5" fill="#4a88cc"/></svg>
<div class="t" style="left:1247px;top:253px;width:73px;transform:rotate(90deg);transform-origin:center;letter-spacing:-0.1px;">Query Builder</div>

<!-- ===== Editor status ===== -->
<div class="t" style="left:353px;top:392px;">1:69 [69]</div>
<div class="t" style="left:409px;top:392px;">INS</div>
<div class="t" style="left:991px;top:392px;letter-spacing:0.25px;">Windows</div>
<div class="t" style="left:1051px;top:392px;letter-spacing:0.35px;">Auto Commit: ON</div>
<div class="t" style="left:1158px;top:392px;">Cp1252</div>
<div class="t" style="left:1209px;top:392px;letter-spacing:0.35px;">Untitled*</div>


<!-- vertical grip + splitter -->
<div class="a" style="left:345px;top:373px;width:2px;height:2px;background:#aaa;box-shadow:0 5px #aaa,0 9px #aaa,0 14px #aaa;"></div>
<div class="a" style="left:802px;top:412px;width:2px;height:2px;background:#aaa;box-shadow:5px 0 #aaa,9px 0 #aaa,14px 0 #aaa;"></div>
<!-- result tab icons -->
<svg style="left:360px;top:425px" width="14" height="13" viewBox="0 0 14 13"><path d="M3,9 V2.5 Q3,1.5 4,1.5 H11.5 Q12,1.5 12,2.5 M11,2 V10.5 Q11,11.5 10,11.5 H2.5 Q1.3,11.5 1.3,10.3 Q1.3,9.3 2.5,9.3 H9.5 Q10.5,9.3 10.5,10.5" fill="none" stroke="#dcbb6e" stroke-width="1.3"/></svg>
<svg style="left:419px;top:425px" width="16" height="14" viewBox="0 0 16 14"><rect x="1.5" y="1.5" width="13" height="11" rx="1" fill="none" stroke="#8a8a8a" stroke-width="1"/><rect x="1.5" y="1.5" width="13" height="2.5" fill="#8a8a8a"/><path d="M4.5,4V12.5M7,4V12.5M9.5,4V12.5M12,4V12.5M1.5,9.5H14.5" stroke="#8a8a8a" stroke-width="0.8"/></svg>
<svg style="left:674px;top:427px" width="11" height="11" viewBox="0 0 11 11"><path d="M1,1 L10,10 M10,1 L1,10" stroke="#9a9a9a" stroke-width="1.1"/></svg>
<div class="a" style="left:1252px;top:428px;width:8px;height:9px;box-sizing:border-box;border:2px solid #b4b4b4;border-radius:1.5px;"></div>
<!-- result toolbar -->
<svg style="left:352px;top:456px" width="14" height="15" viewBox="0 0 14 15"><path d="M6.6,3.3 A4,4 0 0 0 5,11" fill="none" stroke="#4a88cc" stroke-width="1.7"/><path d="M6.6,11.3 A4,4 0 0 0 8.2,3.6" fill="none" stroke="#4a88cc" stroke-width="1.7"/><path d="M6.2,1.2 L9.2,3.3 L6.2,5.4 Z M7,9.2 L4,11.3 L7,13.4 Z" fill="#4a88cc"/></svg>
<svg style="left:371px;top:456px" width="14" height="14" viewBox="0 0 14 14"><circle cx="6.5" cy="7" r="5.5" fill="#707070" stroke="#5e5e5e" stroke-width="1"/></svg>
<div class="vl" style="left:388px;top:453px;height:20px;background:#4e5153"></div>
<svg style="left:393px;top:456px" width="13" height="14" viewBox="0 0 13 14"><path d="M4,2.5 H1.5 V12.5 H10.5 V2.5 H9" fill="none" stroke="#8a8a8a" stroke-width="1"/><path d="M6.5,7 V3 M4.5,3 L6.5,1 L8.5,3 Z" fill="#4a88cc" stroke="#4a88cc" stroke-width="1.5"/></svg>
<svg style="left:412px;top:460px" width="8" height="6" viewBox="0 0 8 6"><path d="M1,1.5 L4,4.5 L7,1.5" fill="none" stroke="#9a9a9a" stroke-width="1.1"/></svg>
<svg style="left:425px;top:456px" width="13" height="13" viewBox="0 0 13 13"><rect x="1.5" y="1.5" width="10" height="10" fill="none" stroke="#8a8a8a" stroke-width="1"/><path d="M1.5,4H11.5M1.5,6.5H11.5M1.5,9H11.5M4,1.5V11.5M6.5,1.5V11.5M9,1.5V11.5" stroke="#8a8a8a" stroke-width="0.8"/></svg>
<svg style="left:445px;top:460px" width="8" height="6" viewBox="0 0 8 6"><path d="M1,1.5 L4,4.5 L7,1.5" fill="none" stroke="#9a9a9a" stroke-width="1.1"/></svg>
<div class="vl" style="left:457px;top:453px;height:20px;background:#4e5153"></div>
<svg style="left:464px;top:456px" width="11" height="14" viewBox="0 0 11 14"><rect x="1.5" y="1.5" width="8" height="11" rx="1" fill="#707070"/><rect x="2.5" y="2.5" width="6" height="2" fill="#4a88cc"/><path d="M2.5,6.5H8.5M2.5,8.5H8.5M2.5,10.5H8.5M4.5,5.5V12M6.5,5.5V12" stroke="#4a4c4e" stroke-width="0.7"/></svg>
<!-- search -->
<div class="a" style="left:1072px;top:452px;width:144px;height:22px;box-sizing:border-box;border:1px solid #55585a;border-radius:2px;background:#45484a;"></div>
<svg style="left:1074px;top:456px" width="14" height="14" viewBox="0 0 14 14"><circle cx="5.5" cy="5.5" r="3.8" fill="none" stroke="#7a7a7a" stroke-width="1.1"/><path d="M8.3,8.3 L12,12" stroke="#8a8a8a" stroke-width="2"/></svg>
<div class="a" style="left:1215px;top:452px;width:19px;height:22px;border-radius:3px;background:#55585a;"></div>
<svg style="left:1217px;top:456px" width="14" height="13" viewBox="0 0 14 13"><rect x="1.5" y="1.5" width="11" height="10" fill="none" stroke="#8a8a8a" stroke-width="1"/><path d="M1.5,4H12.5M1.5,6.5H12.5M1.5,9H12.5M4.2,1.5V11.5M7,1.5V11.5M9.8,1.5V11.5" stroke="#8a8a8a" stroke-width="0.7"/></svg>
<svg style="left:1237px;top:456px" width="12" height="14" viewBox="0 0 12 14"><rect x="1.5" y="1.5" width="9" height="11" fill="none" stroke="#8a8a8a" stroke-width="1"/><path d="M3,4H9M3,6.5H6" stroke="#8a8a8a" stroke-width="0.8"/><rect x="6" y="8" width="3" height="3" fill="#8a8a8a"/></svg>
<svg style="left:1255px;top:456px" width="12" height="14" viewBox="0 0 12 14"><path d="M1.5,1.5 H7.5 L10.5,4.5 V12.5 H1.5 Z" fill="none" stroke="#8a8a8a" stroke-width="1"/><rect x="2.5" y="5" width="7" height="6.5" fill="#4a88cc"/><path d="M3,10 Q5,6 9,7" fill="none" stroke="#2e5e9a" stroke-width="0.8"/></svg>
<!-- ===== Result tabs ===== -->
<div class="t" style="left:377px;top:426px;">Log</div>
<div class="t b" style="left:438px;top:426px;letter-spacing:-0.1px;">1: SELECT DATEDIFF(year, '2023-01... [1]</div>
<div class="a" style="left:409px;top:445px;width:286px;height:3px;background:#4a88c7;"></div>
<div class="hl" style="left:350px;top:447px;width:59px;"></div>
<div class="hl" style="left:695px;top:447px;width:576px;"></div>

<!-- ===== Grid ===== -->
<div class="a" style="left:349px;top:478px;width:922px;height:173px;box-sizing:border-box;border:1px solid #4a6a90;background:#46494b;"></div>
<div class="a" style="left:350px;top:479px;width:27px;height:171px;background:#3f4244;"></div>
<div class="a" style="left:377px;top:505px;width:893px;height:1px;background:#555759;"></div>
<div class="a" style="left:488px;top:479px;width:1px;height:26px;background:#555759;"></div>
<div class="a" style="left:377px;top:506px;width:111px;height:18px;background:#2f65ca;"></div>
<div class="t" style="left:362px;top:487px;">*</div>
<div class="t" style="left:377px;top:487px;letter-spacing:-0.1px;">YearDifference</div>
<div class="t b" style="left:361px;top:510px;">1</div>
<div class="t" style="left:480px;top:510px;color:#fff;">1</div>

<!-- ===== Footer ===== -->
<div class="t" style="left:352px;top:658px;">Number: <span style="color:#5a9ae6;letter-spacing:0.4px">Unformatted</span></div>
<div class="t" style="left:1085px;top:658px;">0.006/0.000 sec</div>
<div class="t" style="left:1185px;top:658px;">1/1</div>
<div class="t" style="left:1217px;top:658px;">1/1</div>
<div class="t" style="left:1250px;top:658px;">1-1</div>

<svg style="left:1104px;top:679px" width="13" height="12" viewBox="0 0 13 12"><rect x="0.5" y="1.5" width="11.5" height="9" fill="none" stroke="#5a5c5e" stroke-width="1"/><path d="M2.5,6 H10 M4,4.5 L2.5,6 L4,7.5 M8.5,4.5 L10,6 L8.5,7.5" fill="none" stroke="#5a5c5e" stroke-width="0.9"/></svg>
<svg style="left:1127px;top:679px" width="10" height="14" viewBox="0 0 10 14"><path d="M0.8,1 H9 V4.5 H0.8 Z M0.8,5.3 H9 V8.7 H0.8 Z M0.8,9.5 H9 V13 H0.8 Z" fill="#6a6c6e"/><path d="M2,2.7H4.5M2,7H4.5M2,11.2H4.5" stroke="#3c3f41" stroke-width="1"/></svg>
<svg style="left:1147px;top:679px" width="14" height="15" viewBox="0 0 14 15"><path d="M6.6,3.3 A4,4 0 0 0 5,11" fill="none" stroke="#56595b" stroke-width="1.5"/><path d="M6.6,11.3 A4,4 0 0 0 8.2,3.6" fill="none" stroke="#56595b" stroke-width="1.5"/><path d="M6.2,1.2 L9.2,3.3 L6.2,5.4 Z M7,9.2 L4,11.3 L7,13.4 Z" fill="#56595b"/></svg>
<svg style="left:1168px;top:679px" width="14" height="12" viewBox="0 0 14 12"><path d="M7,1 L13,11 H1 Z" fill="none" stroke="#8d8d8d" stroke-width="1.1" stroke-linejoin="round"/><path d="M7,4 V8 M7,9 V10" stroke="#8d8d8d" stroke-width="1.1"/></svg>
<svg style="left:1289px;top:679px" width="10" height="14" viewBox="0 0 10 14"><path d="M3.5,1.5 H6.5 M1,3 H9" stroke="#606264" stroke-width="1.2"/><rect x="1.8" y="4" width="6.4" height="9" fill="#606264"/><path d="M3.8,5.5V12M6.2,5.5V12" stroke="#3c3f41" stroke-width="0.8"/></svg>
<div class="a" style="left:1190px;top:676px;width:7px;height:18px;background:#000;"></div>
<div class="t" style="left:1193px;top:679px;letter-spacing:0.25px;">163M of 2048M</div>

<div class="a" style="left:1194px;top:695px;width:84px;height:1px;background:repeating-linear-gradient(90deg,#6a6c6e 0 2px,transparent 2px 5px);"></div>
<div class="a" style="left:1105px;top:695px;width:80px;height:1px;background:repeating-linear-gradient(90deg,#505254 0 2px,transparent 2px 22px);"></div>
</body></html>
